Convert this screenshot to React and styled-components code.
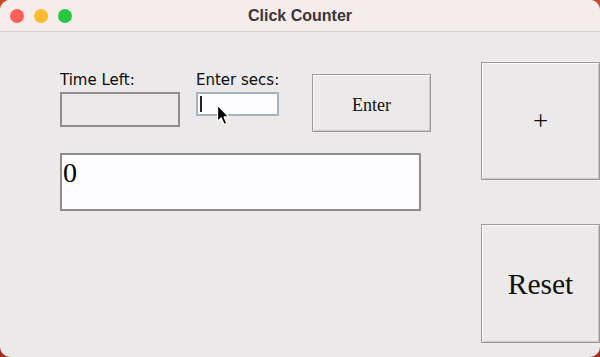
import React from 'react';
import styled, { createGlobalStyle } from 'styled-components';

const Global = createGlobalStyle`
  html, body { margin: 0; padding: 0; }
  body {
    width: 600px;
    height: 357px;
    overflow: hidden;
    background: linear-gradient(180deg, #d2482a 0%, #a52818 100%);
  }
`;

const Window = styled.div`
  width: 600px;
  height: 357px;
  border-radius: 10px;
  overflow: hidden;
  background: #ebe9ea;
  display: flex;
  flex-direction: column;
`;

const TitleBar = styled.div`
  height: 31px;
  flex: none;
  background: #f6ecec;
  border-bottom: 1px solid #d6d2d3;
  display: flex;
  align-items: center;
  position: relative;
`;

const Lights = styled.div`
  display: flex;
  gap: 10px;
  padding-left: 10px;
  margin-top: 1px;
`;

const Light = styled.span`
  width: 14px;
  height: 14px;
  border-radius: 50%;
  background: ${p => p.$c};
`;

const Title = styled.div`
  position: absolute;
  left: 0;
  right: 0;
  text-align: center;
  font-family: "Liberation Sans", Arial, sans-serif;
  font-weight: bold;
  font-size: 16px;
  color: #3b3537;
  top: 7px;
`;

const Content = styled.div`
  flex: 1;
  display: flex;
  padding-top: 30px;
`;

const LeftCol = styled.div`
  margin-left: 60px;
  width: 371px;
  padding-top: 9px;
  display: flex;
  flex-direction: column;
`;

const TopRow = styled.div`
  display: flex;
  align-items: flex-start;
`;

const Field = styled.div`
  display: flex;
  flex-direction: column;
  width: ${p => p.$w}px;
  margin-right: ${p => p.$mr}px;
  position: relative;
`;

const Label = styled.label`
  font-family: "DejaVu Sans", Verdana, sans-serif;
  font-size: 15px;
  line-height: 18px;
  color: #0c0c0c;
  margin-left: 0;
  margin-bottom: 3px;
  white-space: nowrap;
`;

const TimeBox = styled.div`
  height: 31px;
  border: 2px solid #8e8c8d;
  background: #ebe9ea;
`;

const SecsBox = styled.div`
  height: 20px;
  border: 2px solid #a9b2c0;
  background: #fdfcfe;
  position: relative;
`;

const Caret = styled.span`
  position: absolute;
  left: 2px;
  top: 2px;
  width: 2px;
  height: 16px;
  background: #222;
`;

const Pointer = styled.svg`
  position: absolute;
  left: 18px;
  top: 10px;
`;

const Button = styled.button`
  width: ${p => p.$w}px;
  height: ${p => p.$h}px;
  margin-top: ${p => p.$mt || 0}px;
  background: #ebe9ea;
  border: 1px solid #9a9899;
  box-shadow: inset 1px 1px 0 #ffffff, inset -1px -1px 0 #c9c7c8;
  font-family: "Liberation Serif", "Times New Roman", serif;
  font-size: ${p => p.$fs}px;
  color: #111;
  padding: ${p => p.$pt || 0}px 0 0;
  display: flex;
  align-items: center;
  justify-content: center;
  box-sizing: border-box;
`;

const Display = styled.div`
  margin-top: 21px;
  width: 361px;
  height: 58px;
  border: 2px solid #8e8c8d;
  background: #fdfcfe;
  font-family: "Liberation Serif", "Times New Roman", serif;
  font-size: 28px;
  line-height: 28px;
  padding: 4px 0 0 1px;
  box-sizing: border-box;
  color: #000;
`;

const RightCol = styled.div`
  margin-left: 50px;
  display: flex;
  flex-direction: column;
  gap: 44px;
`;

export default function App() {
  return (
    <>
      <Global />
      <Window>
        <TitleBar>
          <Lights>
            <Light $c="#fe5f57" />
            <Light $c="#febc2e" />
            <Light $c="#28c840" />
          </Lights>
          <Title>Click Counter</Title>
        </TitleBar>
        <Content>
          <LeftCol>
            <TopRow>
              <Field $w={120} $mr={16}>
                <Label>Time Left:</Label>
                <TimeBox />
              </Field>
              <Field $w={83} $mr={33}>
                <Label>Enter secs:</Label>
                <SecsBox>
                  <Caret />
                  <Pointer width="14" height="22" viewBox="0 0 14 22">
                    <path d="M1.5 1 L1.5 17.5 L5.2 14 L8 20.5 L10.8 19.3 L8.1 13 L13 13 Z" fill="#000" stroke="#fff" strokeWidth="1.3" strokeLinejoin="round" />
                  </Pointer>
                </SecsBox>
              </Field>
              <Button $w={119} $h={58} $mt={3} $pt={4} $fs={18}>Enter</Button>
            </TopRow>
            <Display>0</Display>
          </LeftCol>
          <RightCol>
            <Button $w={119} $h={118} $fs={27}>+</Button>
            <Button $w={119} $h={119} $pt={2} $fs={29.5}>Reset</Button>
          </RightCol>
        </Content>
      </Window>
    </>
  );
}
